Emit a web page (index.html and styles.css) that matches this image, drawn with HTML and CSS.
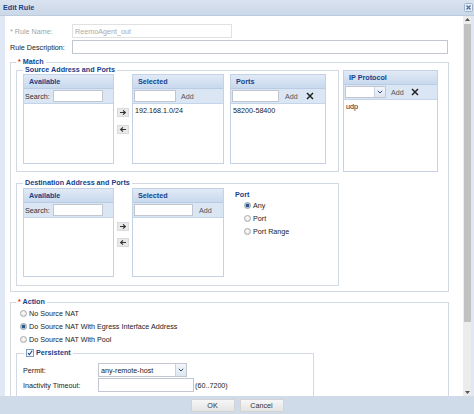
FILE: index.html
```html
<!DOCTYPE html>
<html lang="en">
  <head>
    <meta charset="UTF-8" />
    <title>Edit Rule</title>
    <link rel="stylesheet" href="styles.css">
  </head>
  <body>
    <div class="window">
      <div class="titlebar">
        <span class="title">Edit Rule</span>
        <span class="close">
          <svg width="9" height="9" viewBox="0 0 9 9">
            <rect x="0.5" y="0.5" width="8" height="8" rx="1" fill="#e8eef6" stroke="#9fb3cc"/>
            <path d="M2.5 2.5l4 4M6.5 2.5l-4 4" stroke="#4d6d97" stroke-width="1.3"/>
          </svg>
        </span>
      </div>

      <div class="main">
        <div class="content">
          <div class="form-row">
            <label class="field-label disabled">* Rule Name:</label>
            <input class="text-input name-input" value="ReemoAgent_out" disabled>
          </div>
          <div class="form-row">
            <label class="field-label">Rule Description:</label>
            <input class="text-input desc-input">
          </div>

          <fieldset class="group match">
            <legend><span class="req">*</span> Match</legend>
            <div class="match-top">
              <fieldset class="group sub source">
                <legend>Source Address and Ports</legend>
                <div class="chooser">
                  <div class="panel available">
                    <div class="panel-head">Available</div>
                    <div class="panel-tbar">
                      <span class="tbar-label">Search:</span>
                      <input class="text-input search-input">
                    </div>
                    <div class="panel-list"></div>
                  </div>
                  <div class="arrows">
                    <span class="arrow-btn">
                      <svg width="12" height="9" viewBox="0 0 12 9"><path d="M3 4.5h5.5M6 2.3l2.4 2.2L6 6.7" fill="none" stroke="#333" stroke-width="1.1"/></svg>
                    </span>
                    <span class="arrow-btn">
                      <svg width="12" height="9" viewBox="0 0 12 9"><path d="M9 4.5H3.5M6 2.3L3.6 4.5 6 6.7" fill="none" stroke="#333" stroke-width="1.1"/></svg>
                    </span>
                  </div>
                  <div class="panel selected">
                    <div class="panel-head">Selected</div>
                    <div class="panel-tbar">
                      <input class="text-input add-input">
                      <span class="add-link">Add</span>
                    </div>
                    <div class="panel-list">
                      <div class="list-item">192.168.1.0/24</div>
                    </div>
                  </div>
                  <div class="panel ports">
                    <div class="panel-head">Ports</div>
                    <div class="panel-tbar">
                      <input class="text-input ports-input">
                      <span class="add-link">Add</span>
                      <span class="remove">
                        <svg width="8" height="8" viewBox="0 0 8 8"><path d="M1 1l6 6M7 1L1 7" stroke="#222" stroke-width="1.5"/></svg>
                      </span>
                    </div>
                    <div class="panel-list">
                      <div class="list-item">58200-58400</div>
                    </div>
                  </div>
                </div>
              </fieldset>

              <div class="panel ip-panel">
                <div class="panel-head">IP Protocol</div>
                <div class="panel-tbar">
                  <span class="combo ip-combo">
                    <span class="combo-text"></span>
                    <span class="combo-trigger">
                      <svg width="6" height="4" viewBox="0 0 6 4"><path d="M0.8 0.8L3 3l2.2-2.2" fill="none" stroke="#2b4a75" stroke-width="1"/></svg>
                    </span>
                  </span>
                  <span class="add-link">Add</span>
                  <span class="remove ip-remove">
                    <svg width="8" height="8" viewBox="0 0 8 8"><path d="M1 1l6 6M7 1L1 7" stroke="#222" stroke-width="1.5"/></svg>
                  </span>
                </div>
                <div class="panel-list">
                  <div class="list-item">udp</div>
                </div>
              </div>
            </div>

            <fieldset class="group sub dest">
              <legend>Destination Address and Ports</legend>
              <div class="chooser">
                <div class="panel available dest-panel">
                  <div class="panel-head">Available</div>
                  <div class="panel-tbar">
                    <span class="tbar-label">Search:</span>
                    <input class="text-input search-input">
                  </div>
                  <div class="panel-list"></div>
                </div>
                <div class="arrows">
                  <span class="arrow-btn">
                    <svg width="12" height="9" viewBox="0 0 12 9"><path d="M3 4.5h5.5M6 2.3l2.4 2.2L6 6.7" fill="none" stroke="#333" stroke-width="1.1"/></svg>
                  </span>
                  <span class="arrow-btn">
                    <svg width="12" height="9" viewBox="0 0 12 9"><path d="M9 4.5H3.5M6 2.3L3.6 4.5 6 6.7" fill="none" stroke="#333" stroke-width="1.1"/></svg>
                  </span>
                </div>
                <div class="panel selected dest-panel">
                  <div class="panel-head">Selected</div>
                  <div class="panel-tbar">
                    <input class="text-input dest-add-input">
                    <span class="add-link">Add</span>
                  </div>
                  <div class="panel-list"></div>
                </div>
                <div class="port-group">
                  <div class="port-title">Port</div>
                  <div class="radio-row"><span class="radio checked"></span>Any</div>
                  <div class="radio-row"><span class="radio"></span>Port</div>
                  <div class="radio-row"><span class="radio"></span>Port Range</div>
                </div>
              </div>
            </fieldset>
          </fieldset>

          <fieldset class="group action">
            <legend><span class="req">*</span> Action</legend>
            <div class="radio-row"><span class="radio"></span>No Source NAT</div>
            <div class="radio-row"><span class="radio checked"></span>Do Source NAT With Egress Interface Address</div>
            <div class="radio-row"><span class="radio"></span>Do Source NAT With Pool</div>

            <fieldset class="group persistent">
              <legend>
                <span class="checkbox">
                  <svg width="8" height="8" viewBox="0 0 8 8"><rect x="0.5" y="0.5" width="7" height="7" fill="#f4f7fb" stroke="#7f9dc4"/><path d="M2 4.2l1.4 1.5L6.2 1.8" fill="none" stroke="#1f3f6e" stroke-width="1.1"/></svg>
                </span>
                Persistent
              </legend>
              <div class="form-row">
                <label class="field-label wide">Permit:</label>
                <span class="combo permit-combo">
                  <span class="combo-text">any-remote-host</span>
                  <span class="combo-trigger">
                    <svg width="6" height="4" viewBox="0 0 6 4"><path d="M0.8 0.8L3 3l2.2-2.2" fill="none" stroke="#2b4a75" stroke-width="1"/></svg>
                  </span>
                </span>
              </div>
              <div class="form-row">
                <label class="field-label wide">Inactivity Timeout:</label>
                <input class="text-input timeout-input">
                <span class="hint">(60..7200)</span>
              </div>
            </fieldset>
          </fieldset>
        </div>

        <div class="scrollbar">
          <span class="sb-arrow">
            <svg width="5" height="3" viewBox="0 0 5 3"><path d="M0 3h5L2.5 0z" fill="#555"/></svg>
          </span>
          <span class="sb-thumb"></span>
          <span class="sb-track"></span>
          <span class="sb-arrow">
            <svg width="5" height="3" viewBox="0 0 5 3"><path d="M0 0h5L2.5 3z" fill="#555"/></svg>
          </span>
        </div>
      </div>

      <div class="footer">
        <button class="btn">OK</button>
        <button class="btn">Cancel</button>
      </div>
    </div>
  </body>
</html>
```

FILE: styles.css
```css
body {
  margin: 0;
  font-family: "Liberation Sans", Arial, sans-serif;
  font-size: 7.2px;
  color: #222;
}

.window {
  width: 474px;
  height: 414px;
  display: flex;
  flex-direction: column;
  background: #dfe8f4;
}

.titlebar {
  height: 15px;
  border-bottom: 1px solid #bccbdd;
  background: linear-gradient(#d9e3ef, #cbd8e8);
  display: flex;
  align-items: center;
  justify-content: space-between;
  padding: 0 1px 0 3px;
}

.title {
  font-weight: bold;
  color: #15428b;
}

.close {
  display: flex;
}

.main {
  flex: 1;
  min-height: 0;
  display: flex;
  padding: 0 3px 0 5px;
}

.content {
  flex: 1;
  background: #fff;
  overflow: hidden;
  padding: 8px 0 0 5px;
}

/* form rows */

.form-row {
  display: flex;
  align-items: center;
  height: 14px;
  margin-bottom: 2px;
}

.field-label {
  width: 62px;
  flex-shrink: 0;
}

.field-label.disabled {
  color: #a4a4a4;
}

.field-label.wide {
  width: 75px;
}

.text-input {
  box-sizing: border-box;
  height: 14px;
  margin: 0;
  padding: 0 2px;
  border: 1px solid #c2c6d0;
  background: #fff;
  font: inherit;
  line-height: 11px;
  color: #222;
  outline: none;
}

.name-input {
  width: 160px;
  border-color: #e1e1e1;
  color: #aaa;
  background: #fff;
}

.desc-input {
  width: 376px;
}

/* fieldsets */

.group {
  box-sizing: border-box;
  margin: 0;
  min-width: 0;
  border: 1px solid #d2d9e2;
}

.group legend {
  font-weight: bold;
  color: #15428b;
  line-height: 8px;
  padding: 0 2px;
}

.req {
  color: #e02020;
}

.match {
  width: 439px;
  margin-top: 4px;
  padding: 0 5px 5px 5px;
}

.match-top {
  display: flex;
  align-items: flex-start;
  gap: 4px;
}

.sub {
  width: 323px;
}

.source {
  padding: 0 0 7px 6px;
}

.dest {
  margin-top: 7px;
  padding: 1px 0 8px 6px;
}

.chooser {
  display: flex;
  align-items: flex-start;
}

/* list panels */

.panel {
  box-sizing: border-box;
  height: 90px;
  display: flex;
  flex-direction: column;
  border: 1px solid #c3d2e4;
  background: #fff;
}

.dest-panel {
  height: 89px;
}

.panel-head {
  height: 13px;
  flex-shrink: 0;
  display: flex;
  align-items: center;
  padding-left: 5px;
  font-weight: bold;
  color: #15428b;
  background: linear-gradient(#e1eaf6, #c9d9ee);
  border-bottom: 1px solid #b9cce4;
}

.panel-tbar {
  height: 15px;
  flex-shrink: 0;
  box-sizing: border-box;
  display: flex;
  align-items: center;
  padding-left: 1px;
  background: #dbe6f4;
  border-bottom: 1px solid #c5d5e9;
}

.panel-tbar .text-input {
  height: 12px;
}

.panel-list {
  flex: 1;
  padding: 3px 2px;
}

.list-item {
  line-height: 8px;
}

.available {
  width: 91px;
}

.selected {
  width: 92px;
}

.ports {
  width: 96px;
  margin-left: 6px;
}

.ip-panel {
  width: 95px;
  height: 102px;
  margin-top: 4px;
}

.tbar-label {
  color: #333;
}

.search-input {
  width: 50px;
  margin-left: 3px !important;
}

.add-input {
  width: 42px;
}

.dest-add-input {
  width: 59px;
}

.ports-input {
  width: 47px;
}

.add-link {
  color: #555;
  margin-left: 5px;
}

.ports .add-link,
.dest-panel .add-link {
  margin-left: 6px;
}

.remove {
  display: flex;
  margin-left: 8px;
}

.ip-remove {
  margin-left: 7px;
}

.arrows {
  width: 18px;
  flex-shrink: 0;
  display: flex;
  flex-direction: column;
  align-items: center;
  gap: 8px;
  padding-top: 34px;
}

.dest .arrows {
  gap: 7px;
}

.arrow-btn {
  display: flex;
  width: 12px;
  height: 9px;
  background: #e9e9e9;
  box-shadow: inset 0 0 0 1px #dadada;
}

/* combo boxes */

.combo {
  box-sizing: border-box;
  display: flex;
  align-items: center;
  border: 1px solid #c2c6d0;
  background: #fff;
}

.ip-combo {
  width: 41px;
  height: 12px;
}

.permit-combo {
  width: 89px;
  height: 14px;
}

.combo-text {
  flex: 1;
  padding-left: 2px;
}

.combo-trigger {
  width: 10px;
  align-self: stretch;
  display: flex;
  align-items: center;
  justify-content: center;
  background: linear-gradient(#f3f6fa, #dde5ef);
  border-left: 1px solid #c9d2de;
}

/* radios and checkbox */

.port-group {
  margin-left: 11px;
  padding-top: 3px;
}

.port-title {
  font-weight: bold;
  color: #15428b;
  line-height: 8px;
}

.port-group .radio-row {
  padding-left: 9px;
}

.radio-row {
  height: 13px;
  display: flex;
  align-items: center;
}

.radio {
  box-sizing: border-box;
  width: 7px;
  height: 7px;
  margin-right: 2px;
  border-radius: 50%;
  border: 1px solid #a9a9a9;
  background: radial-gradient(circle at 50% 40%, #fff, #dcdcdc);
}

.radio.checked {
  border-color: #8e9fb5;
  background: radial-gradient(circle, #34557f 0, #34557f 1.4px, #a9bdd6 2px, #eef2f7 3px);
}

.action {
  width: 439px;
  margin-top: 6px;
  padding: 1px 0 0 5px;
}

.action > .radio-row {
  padding-left: 4px;
}

.persistent {
  width: 298px;
  margin-top: 3px;
  padding: 6px 0 8px 6px;
}

.persistent legend {
  display: flex;
  align-items: center;
  margin-left: 1px;
  padding: 0 2px 0 2px;
}

.checkbox {
  display: flex;
  margin-right: 2px;
}

.persistent .form-row {
  margin-bottom: 1px;
}

.timeout-input {
  width: 96px;
}

.hint {
  margin-left: 1px;
}

/* scrollbar */

.scrollbar {
  width: 8px;
  display: flex;
  flex-direction: column;
  align-items: center;
  background: #ececec;
}

.sb-arrow {
  height: 7px;
  display: flex;
  align-items: center;
}

.sb-thumb {
  width: 7px;
  height: 298px;
  margin-top: 1px;
  background: #c1c1c1;
}

.sb-track {
  flex: 1;
}

/* footer */

.footer {
  height: 18px;
  display: flex;
  justify-content: center;
  align-items: center;
  gap: 5px;
  background: #cfdbe9;
  padding-top: 1px;
  box-sizing: border-box;
}

.btn {
  width: 44px;
  height: 13px;
  padding: 0;
  font: inherit;
  color: #333;
  border: 1px solid #d3d3d3;
  background: linear-gradient(#f7f7f7, #e4e4e4);
}
```
